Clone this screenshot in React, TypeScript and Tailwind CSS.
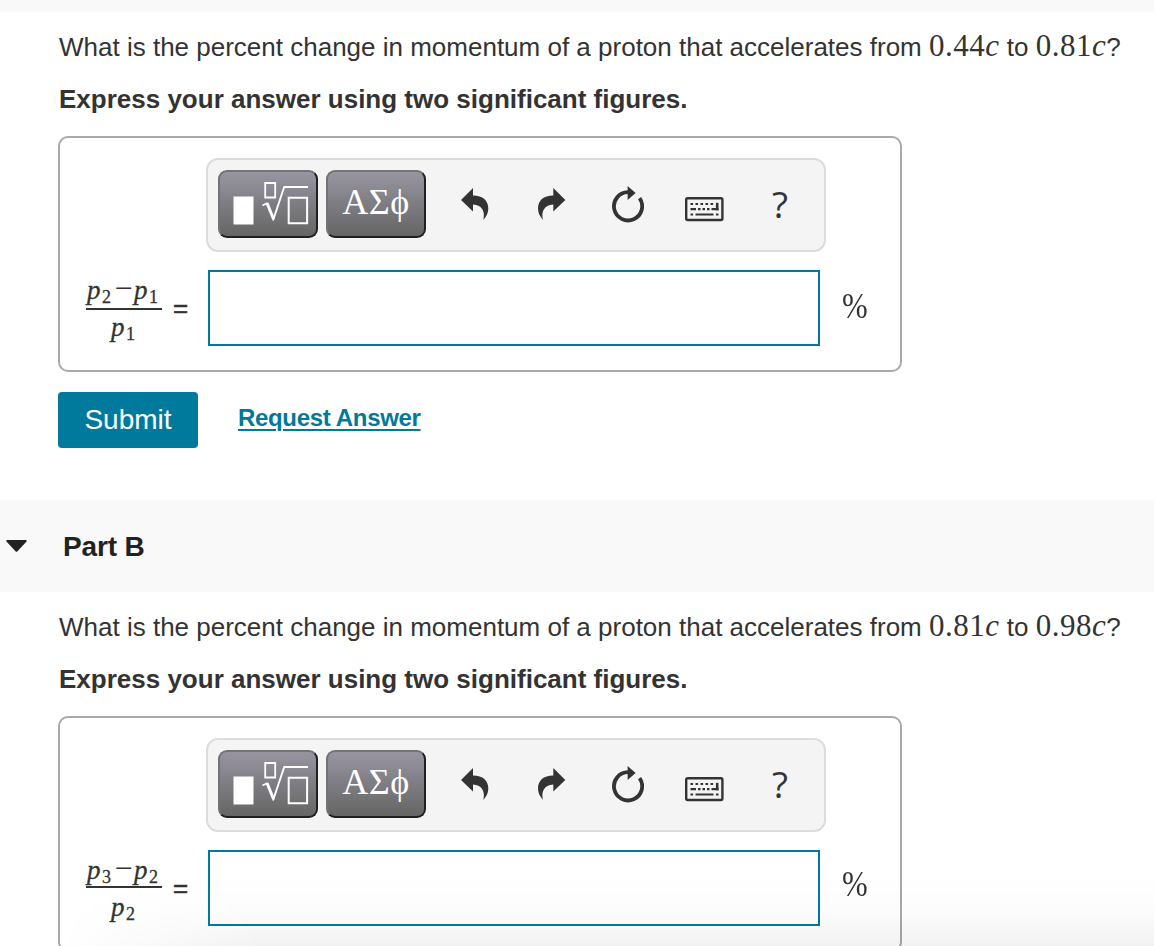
import React from "react";

interface MathTerm {
  base: string;
  sub: string;
}

interface PartData {
  from: string;
  to: string;
  numerator: [MathTerm, MathTerm];
  denominator: MathTerm;
  raised?: boolean;
}

const parts: PartData[] = [
  {
    from: "0.44",
    to: "0.81",
    numerator: [
      { base: "p", sub: "2" },
      { base: "p", sub: "1" },
    ],
    denominator: { base: "p", sub: "1" },
  },
  {
    from: "0.81",
    to: "0.98",
    numerator: [
      { base: "p", sub: "3" },
      { base: "p", sub: "2" },
    ],
    denominator: { base: "p", sub: "2" },
    raised: true,
  },
];

const Speed = ({ value }: { value: string }) => (
  <span className="font-['Liberation_Serif',serif] text-[31px] leading-[24px] tracking-[0.5px]">
    {value}
    <i>c</i>
  </span>
);

const Term = ({ base, sub }: MathTerm) => (
  <span className="flex items-baseline [-webkit-text-stroke:0.3px_#333]">
    <i className="w-[15px] text-[27px] leading-[28px]">{base}</i>
    <span className="relative top-[4px] w-[11px] text-[18px] leading-[20px]">
      {sub}
    </span>
  </span>
);

const TemplateIcon = () => (
  <svg
    className="shrink-0"
    width="100"
    height="68"
    viewBox="0 0 100 68"
    fill="none"
    stroke="#fff"
  >
    <path d="M15.5 26.5h20v28h-20z" fill="#fff" stroke="none" />
    <path d="M47.2 13h10v14.5h-10z" strokeWidth="1.8" />
    <path d="M70.700 27.700h18.400v25.600H70.700z" strokeWidth="2" />
    <path d="M44.5 35.500l5-2.500" strokeWidth="1.600" />
    <path d="M49 33l6.500 16" strokeWidth="3" />
    <path d="M55 50.500L66.200 17H90" strokeWidth="1.900" />
  </svg>
);

const UndoIcon = () => (
  <svg width="28" height="34" viewBox="0 0 28 34" fill="#333">
    <path d="M0 12L12 0v7.400C22 7.400 27.300 12.500 27.300 20.500c0 4.500-2 8-5 11.500C24.300 24 21.500 17 12 16.500v7z" />
  </svg>
);

const RedoIcon = () => (
  <svg width="28" height="34" viewBox="0 0 28 34" fill="#333">
    <path d="M27.300 12L15.300 0v7.400C5.300 7.400 0 12.500 0 20.500c0 4.500 2 8 5 11.500C3 24 5.800 17 15.300 16.500v7z" />
  </svg>
);

const ResetIcon = () => (
  <svg width="32" height="38" viewBox="0 0 32 38" fill="none">
    <path
      d="M16 6.200A14.100 14.100 0 1 0 27.600 12.200"
      stroke="#333"
      strokeWidth="3.800"
    />
    <path d="M15.600 0l8 7-8 7z" fill="#333" />
  </svg>
);

const KeyboardIcon = () => (
  <svg width="39" height="25" viewBox="0 0 39 25" fill="none" stroke="#333">
    <rect x="1.200" y="1.200" width="36.200" height="21.800" rx="1.500" strokeWidth="2.400" />
    <path d="M5.500 7h23" strokeWidth="2.200" strokeDasharray="2.600 2.400" />
    <path d="M5.500 12.200h5.500m2 0h2.500m2 0h2.500m2 0h2.500m2 0h7" strokeWidth="2.200" />
    <path d="M32.200 5.800v7.500" strokeWidth="2.600" />
    <path d="M5.500 17.500h2.600m2.400 0h18m2.400 0h2.600" strokeWidth="2.200" />
  </svg>
);

const editorButton =
  "flex h-[68px] w-[100px] items-center justify-center rounded-[9px] border-2 border-t-[#737373] border-l-[#737373] border-r-[#202020] border-b-[#202020] bg-linear-to-b from-[#9895a1] to-[#656565] text-white";

const Toolbar = () => (
  <div className="ml-[146px] flex h-[94px] w-[620px] items-start rounded-[12px] border-2 border-[#dcdcdc] bg-[#f4f4f4] pt-[10px] pl-[10px]">
    <button className={editorButton} aria-label="Templates">
      <TemplateIcon />
    </button>
    <button
      className={`${editorButton} ml-2 pb-[5px] font-['Liberation_Serif',serif] text-[36px] leading-none tracking-[0.6px]`}
    >
      ΑΣϕ
    </button>
    <button className="mt-[18px] ml-[35px]" aria-label="Undo">
      <UndoIcon />
    </button>
    <button className="mt-[18px] ml-[49px]" aria-label="Redo">
      <RedoIcon />
    </button>
    <button className="mt-[16px] ml-[46px]" aria-label="Reset">
      <ResetIcon />
    </button>
    <button className="mt-[27px] ml-[41px]" aria-label="Keyboard shortcuts">
      <KeyboardIcon />
    </button>
    <button className="mt-[16px] ml-[48px] font-['Open_Sans',sans-serif] text-[37px] leading-[36px] text-[#333]">
      ?
    </button>
  </div>
);

const Fraction = ({ numerator, denominator, raised }: PartData) => (
  <div className="ml-[26px] h-[76px] w-[76px] font-['Liberation_Serif',serif]">
    <div
      className={`flex items-baseline border-b-2 border-[#333] pt-[4px] pl-px ${raised ? "h-[38px]" : "h-[40px]"}`}
    >
      <Term {...numerator[0]} />
      <span className="w-[21px] text-center text-[32px] leading-[28px]">−</span>
      <Term {...numerator[1]} />
    </div>
    <div className={`flex justify-center ${raised ? "pt-[5px]" : "pt-[3px]"}`}>
      <Term {...denominator} />
    </div>
  </div>
);

const AnswerBox = ({ part }: { part: PartData }) => (
  <div className="mt-[22px] h-[236px] w-[844px] rounded-[10px] border-2 border-[#a9a9a9] pt-5">
    <Toolbar />
    <div className="mt-[18px] flex h-[76px] items-start">
      <Fraction {...part} />
      <span className="mt-[23px] ml-[11px] w-[35px] text-[26px] leading-[30px] [-webkit-text-stroke:0.5px_#333]">
        =
      </span>
      <input
        className="h-[76px] w-[612px] border-2 border-[#007a9c] bg-white px-3 outline-none"
        aria-label="Answer in percent"
      />
      <span
        className={`ml-[22px] origin-left scale-x-88 font-['Liberation_Serif',serif] text-[35px] leading-[38px] ${part.raised ? "mt-[16px]" : "mt-[18px]"}`}
      >
        %
      </span>
    </div>
  </div>
);

const Question = ({ part }: { part: PartData }) => (
  <section className="pt-5 pl-[58px] text-[26px] text-[#333]">
    <p className="h-[30px] pl-px leading-[30px] whitespace-nowrap">
      What is the percent change in momentum of a proton that accelerates from{" "}
      <Speed value={part.from} /> to <Speed value={part.to} />?
    </p>
    <p className="mt-[22px] h-[30px] pl-px leading-[30px] font-bold whitespace-nowrap">
      Express your answer using two significant figures.
    </p>
    <AnswerBox part={part} />
  </section>
);

const Actions = () => (
  <div className="mt-5 ml-[58px] flex h-[56px] items-start gap-10">
    <button className="h-[56px] w-[140px] rounded-[4px] bg-[#007a9c] text-[28px] leading-[56px] text-white">
      Submit
    </button>
    <a
      href="#"
      className="mt-[11px] text-[24px] leading-[30px] font-bold tracking-[-0.33px] whitespace-nowrap text-[#007a9c] underline decoration-2 underline-offset-[3px]"
    >
      Request Answer
    </a>
  </div>
);

export default function App() {
  return (
    <div className="relative h-[946px] w-[1154px] overflow-hidden bg-white font-['Liberation_Sans',Arial,sans-serif]">
      <div className="h-3 bg-[#f9f9f9]" />
      <Question part={parts[0]} />
      <Actions />
      <div className="mt-[52px] flex h-[92px] items-center bg-[#f9f9f9] pl-[6px] text-[#222]">
        <svg width="21" height="12" viewBox="0 0 21 12" fill="#222">
          <path d="M1.500 0h18c1.200 0 1.600 1 .8 1.800L11.500 11.200q-1 1-2 0L.7 1.800C-.1 1 .300 0 1.500 0z" />
        </svg>
        <h2 className="ml-[36px] pt-px text-[28px] leading-[32px] font-bold tracking-[-0.15px]">
          Part B
        </h2>
      </div>
      <Question part={parts[1]} />
      {/* soft shadow along the bottom edge, fading out towards the left */}
      <div className="pointer-events-none absolute inset-x-0 bottom-0 h-[70px] bg-linear-to-b from-transparent via-black/[0.012] to-black/5 mask-[linear-gradient(to_right,transparent_60px,black_260px)]" />
    </div>
  );
}
